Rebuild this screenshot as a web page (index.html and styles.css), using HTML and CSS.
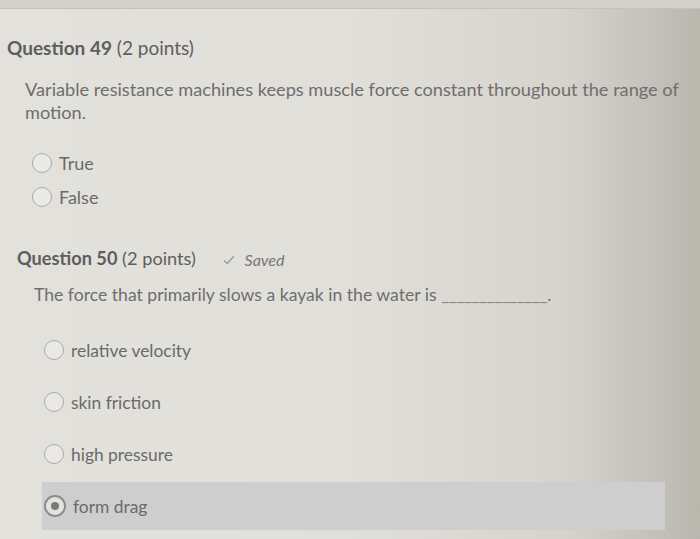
FILE: index.html
```html
<!DOCTYPE html>
<html>
<head>
  <link rel="stylesheet" href="styles.css">
</head>
<body>
  <div class="top-strip"></div>

  <div class="question q49">
    <h2 class="question-title"><strong>Question 49</strong> (2 points)</h2>
    <p class="question-text">Variable resistance machines keeps muscle force constant throughout the range of motion.</p>
    <div class="answers">
      <label class="answer"><span class="radio"></span>True</label>
      <label class="answer"><span class="radio"></span>False</label>
    </div>
  </div>

  <div class="question q50">
    <h2 class="question-title">
      <strong>Question 50</strong> (2 points)
      <span class="saved">
        <svg width="12" height="10" viewBox="0 0 12 10"><path d="M1 5.5 L4.2 8.5 L11 1.2" fill="none" stroke="#9a9a9a" stroke-width="1.4"/></svg>
        Saved
      </span>
    </h2>
    <p class="question-text">The force that primarily slows a kayak in the water is <span class="blank">______________</span>.</p>
    <div class="answers">
      <label class="answer"><span class="radio"></span>relative velocity</label>
      <label class="answer"><span class="radio"></span>skin friction</label>
      <label class="answer"><span class="radio"></span>high pressure</label>
      <label class="answer selected"><span class="radio checked"></span>form drag</label>
    </div>
  </div>
</body>
</html>
```

FILE: styles.css
```css
body {
  margin: 0;
  height: 539px;
  overflow: hidden;
  font-family: Lato, "Open Sans", sans-serif;
  color: #6a6a6a;
  background: linear-gradient(to right, #e3e1dc 0%, #e1dfd9 50%, #d6d4cd 80%, #bab7af 100%);
}

.top-strip {
  height: 8px;
  background: #d3d1cb;
  border-bottom: 1px solid #c4c2bc;
}

.question-title {
  margin: 0;
  font-weight: normal;
  line-height: 22px;
  color: #5e5e5e;
}

.question-title strong {
  font-weight: bold;
}

.question-text {
  margin: 0;
  line-height: 23px;
  color: #6e6e6e;
}

.q49 {
  padding-left: 7px;
  padding-top: 28px;
}

.q49 .question-title {
  font-size: 19px;
}

.q49 .question-text {
  margin-top: 19px;
  padding-left: 18px;
  padding-right: 10px;
  font-size: 18.2px;
}

.q49 .answers {
  margin-top: 22px;
  padding-left: 25px;
}

.q49 .answer {
  height: 34px;
  font-size: 18px;
}

.q50 {
  padding-left: 17px;
  padding-top: 33px;
}

.q50 .question-title {
  font-size: 18.2px;
}

.q50 .question-text {
  margin-top: 12px;
  padding-left: 17px;
  font-size: 17.6px;
}

.q50 .answers {
  margin-top: 20px;
  padding-left: 25px;
  padding-right: 35px;
  display: flex;
  flex-direction: column;
  gap: 4px;
}

.q50 .answer {
  height: 48px;
  padding-left: 2px;
  font-size: 17.4px;
}

.saved {
  display: inline-flex;
  align-items: center;
  gap: 10px;
  margin-left: 22px;
  font-size: 16px;
  font-style: italic;
  color: #777777;
}

.blank {
  color: #8a8a8a;
  letter-spacing: -0.5px;
}

.answer {
  display: flex;
  align-items: center;
  gap: 7px;
  color: #6a6a6a;
}

.answer.selected {
  background: #cdcecd;
}

.radio {
  width: 18px;
  height: 18px;
  border: 1.5px solid #a9a9a7;
  border-radius: 50%;
  background: #ebe9e5;
  display: flex;
  align-items: center;
  justify-content: center;
}

.radio.checked {
  border-color: #8c8c8c;
  border-width: 2px;
  background: #e4e3e0;
}

.radio.checked::after {
  content: "";
  width: 8px;
  height: 8px;
  border-radius: 50%;
  background: #7a7a7a;
}
```
